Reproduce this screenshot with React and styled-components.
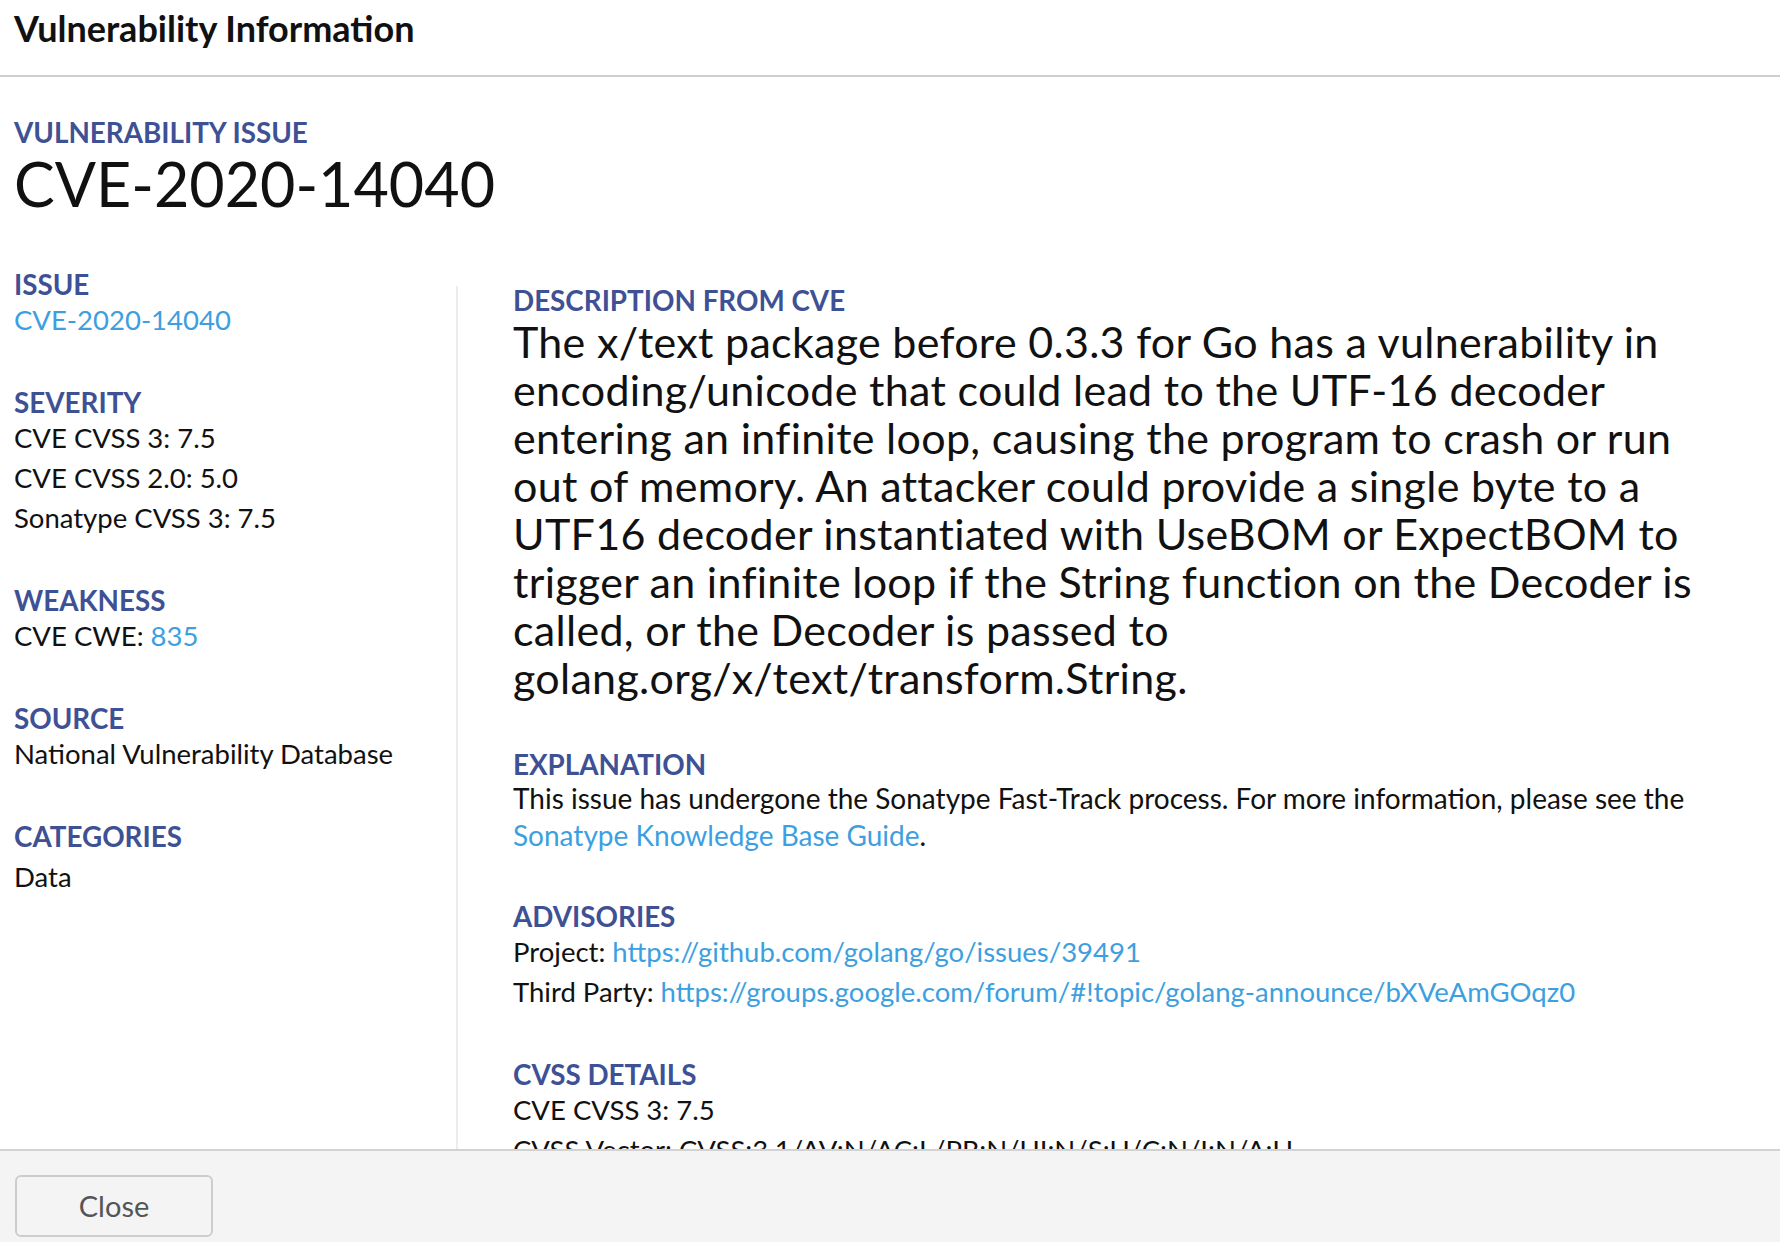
import styled, { createGlobalStyle } from 'styled-components';

const GlobalStyle = createGlobalStyle`
  html, body {
    margin: 0;
    height: 100%;
    overflow: hidden;
    background: #fff;
    font-family: Lato, 'Open Sans', 'Liberation Sans', sans-serif;
    color: #111;
  }
  * {
    box-sizing: border-box;
  }
`;

const Modal = styled.div`
  display: flex;
  flex-direction: column;
  height: 100vh;
  background: #fff;
`;

const Header = styled.header`
  flex-shrink: 0;
  height: 77px;
  padding: 8px 14px 0;
  border-bottom: 2px solid #cfcfcf;
`;

const Title = styled.h1`
  margin: 0;
  font-size: 36px;
  line-height: 40px;
  font-weight: 700;
  color: #111;
`;

const Body = styled.main`
  flex: 1;
  overflow: hidden;
  padding: 41px 56px 0 14px;
`;

const Label = styled.div`
  font-size: 27.8px;
  line-height: 30px;
  font-weight: 700;
  color: #3e5194;
  text-transform: uppercase;
`;

const BigId = styled.div`
  font-size: 61px;
  line-height: 72px;
  font-weight: 400;
  color: #111;
`;

const Columns = styled.div`
  display: grid;
  grid-template-columns: 442px 1fr;
  margin-top: 50px;
  align-items: start;
`;

const Sidebar = styled.aside`
  display: flex;
  flex-direction: column;
  gap: 48px;
`;

const Content = styled.section`
  display: flex;
  flex-direction: column;
  gap: 48px;
  margin-top: 16px;
  padding-left: 55px;
  border-left: 2px solid #ececec;
  min-height: 1000px;
`;

const Group = styled.div``;

const Line = styled.div`
  font-size: 27.5px;
  line-height: 40px;
  padding-top: ${(p) => (p.$tag ? '5px' : '0')};
`;

const Description = styled.p`
  margin: 2px 0 0;
  font-size: 43px;
  line-height: 48px;
  letter-spacing: 0.3px;
`;

const Paragraph = styled.p`
  margin: 0;
  font-size: 28px;
  line-height: 37px;
`;

const Link = styled.a`
  color: #3d9fe0;
  text-decoration: none;
`;

const Footer = styled.footer`
  flex-shrink: 0;
  height: 93px;
  padding: 24px 15px 0;
  background: #f4f4f4;
  border-top: 2px solid #d2d2d2;
`;

const Button = styled.button`
  width: 198px;
  height: 62px;
  border: 2px solid #cdcdcd;
  border-radius: 6px;
  background: #f4f4f4;
  color: #555;
  font-family: inherit;
  font-size: 29px;
  padding-bottom: 3px;
  cursor: pointer;
`;

const App = () => (
  <Modal>
    <GlobalStyle />
    <Header>
      <Title>Vulnerability Information</Title>
    </Header>
    <Body>
      <Label>Vulnerability Issue</Label>
      <BigId>CVE-2020-14040</BigId>
      <Columns>
        <Sidebar>
          <Group>
            <Label>Issue</Label>
            <Line>
              <Link href="#">CVE-2020-14040</Link>
            </Line>
          </Group>
          <Group>
            <Label>Severity</Label>
            <Line>CVE CVSS 3: 7.5</Line>
            <Line>CVE CVSS 2.0: 5.0</Line>
            <Line>Sonatype CVSS 3: 7.5</Line>
          </Group>
          <Group>
            <Label>Weakness</Label>
            <Line>
              CVE CWE: <Link href="#">835</Link>
            </Line>
          </Group>
          <Group>
            <Label>Source</Label>
            <Line>National Vulnerability Database</Line>
          </Group>
          <Group>
            <Label>Categories</Label>
            <Line $tag>Data</Line>
          </Group>
        </Sidebar>
        <Content>
          <Group>
            <Label>Description from CVE</Label>
            <Description>
              The x/text package before 0.3.3 for Go has a vulnerability in
              encoding/unicode that could lead to the UTF-16 decoder entering
              an infinite loop, causing the program to crash or run out of
              memory. An attacker could provide a single byte to a UTF16
              decoder instantiated with UseBOM or ExpectBOM to trigger an
              infinite loop if the String function on the Decoder is called,
              or the Decoder is passed to golang.org/x/text/transform.String.
            </Description>
          </Group>
          <Group>
            <Label>Explanation</Label>
            <Paragraph>
              This issue has undergone the Sonatype Fast-Track process. For
              more information, please see the{' '}
              <Link href="#">Sonatype Knowledge Base Guide</Link>.
            </Paragraph>
          </Group>
          <Group>
            <Label>Advisories</Label>
            <Line>
              Project:{' '}
              <Link href="#">https://github.com/golang/go/issues/39491</Link>
            </Line>
            <Line>
              Third Party:{' '}
              <Link href="#">
                https://groups.google.com/forum/#!topic/golang-announce/bXVeAmGOqz0
              </Link>
            </Line>
          </Group>
          <Group>
            <Label>CVSS Details</Label>
            <Line>CVE CVSS 3: 7.5</Line>
            <Line>CVSS Vector: CVSS:3.1/AV:N/AC:L/PR:N/UI:N/S:U/C:N/I:N/A:H</Line>
          </Group>
        </Content>
      </Columns>
    </Body>
    <Footer>
      <Button>Close</Button>
    </Footer>
  </Modal>
);

export default App;
